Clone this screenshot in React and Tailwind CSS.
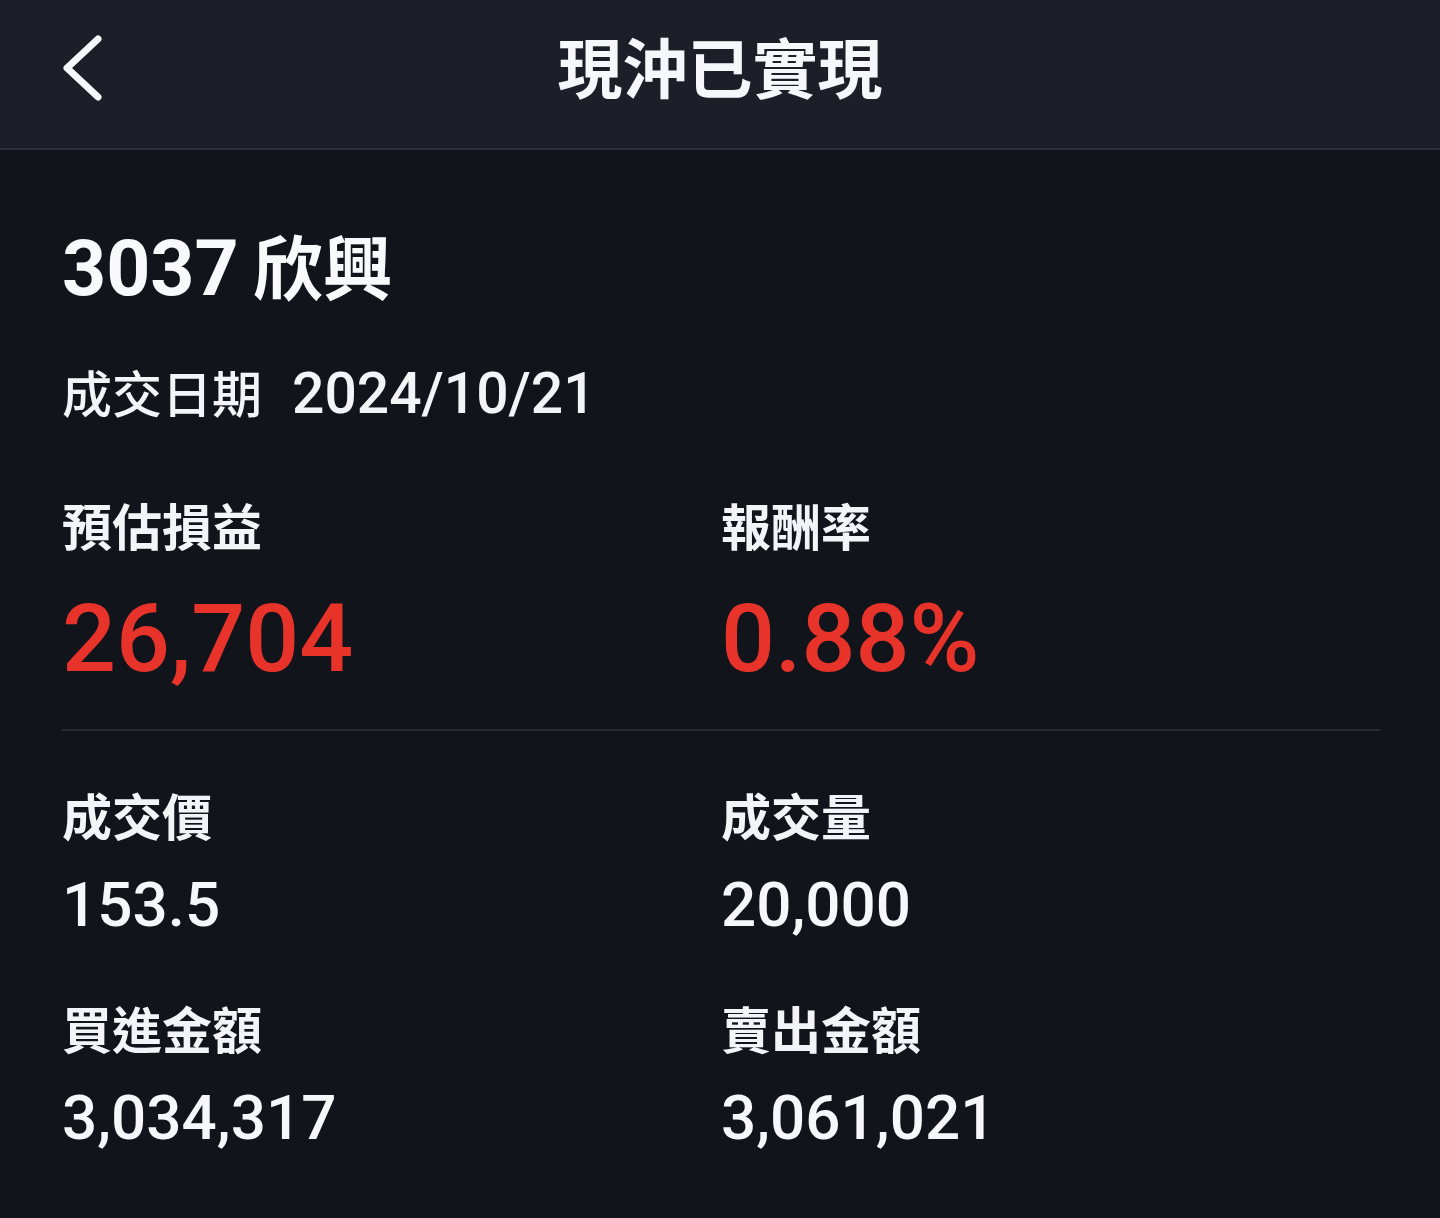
import React from 'react';

const FONT = "font-[family-name:Roboto,'Noto_Sans_CJK_TC',sans-serif]";

const BackIcon = () => (
    <svg width="44" height="70" viewBox="0 0 44 70" fill="none">
        <path d="M37 6 L6 35 L37 64" stroke="#f5f7fa" strokeWidth="7" strokeLinecap="round" strokeLinejoin="round" />
    </svg>
);

const Label = ({ children }) => (
    <div className="h-[60px] leading-[60px] text-[50px] font-semibold text-[#f2f4f7]">{children}</div>
);

const Stat = ({ label, value }) => (
    <div>
        <Label>{label}</Label>
        <div className="mt-[21px] h-[70px] leading-[70px] text-[62px] font-medium text-[#f5f7fa]">{value}</div>
    </div>
);

export default function App() {
    return (
        <div className={`${FONT} min-h-[1218px] w-[1440px] bg-[#12141b] text-white`}>
            {/* HEADER */}
            <div className="h-[150px] grid grid-cols-[1fr_auto_1fr] items-center bg-[#1c1f27] border-b-2 border-[#2a2e38]">
                <div className="pl-[61px] -mt-[12px]">
                    <BackIcon />
                </div>
                <h1 className="text-[65px] font-bold leading-none -mt-[6px] text-[#f5f7fa]">現沖已實現</h1>
                <div />
            </div>

            {/* CONTENT */}
            <div className="pl-[62px] pr-[60px]">
                <div className="mt-[79px] h-[80px] leading-[80px] font-bold text-[#f8f9fb]">
                    <span className="text-[77px]">3037</span>
                    <span className="text-[70px] ml-[14px]">欣興</span>
                </div>

                <div className="mt-[55px] h-[60px] leading-[60px] font-medium text-[#f2f4f7]">
                    <span className="text-[50px]">成交日期</span>
                    <span className="text-[57px] ml-[30px]">2024/10/21</span>
                </div>

                <div className="mt-[75px] grid grid-cols-2">
                    <div>
                        <Label>預估損益</Label>
                        <div className="mt-[30px] h-[100px] leading-[100px] text-[95px] font-medium text-[#e8332a]">26,704</div>
                    </div>
                    <div>
                        <Label>報酬率</Label>
                        <div className="mt-[30px] h-[100px] leading-[100px] text-[95px] font-medium text-[#e8332a]">0.88%</div>
                    </div>
                </div>

                <div className="mt-[40px] border-t-2 border-[#262a33]" />

                <div className="mt-[58px] grid grid-cols-2 gap-y-[62px]">
                    <Stat label="成交價" value="153.5" />
                    <Stat label="成交量" value="20,000" />
                    <Stat label="買進金額" value="3,034,317" />
                    <Stat label="賣出金額" value="3,061,021" />
                </div>
            </div>
        </div>
    );
}
